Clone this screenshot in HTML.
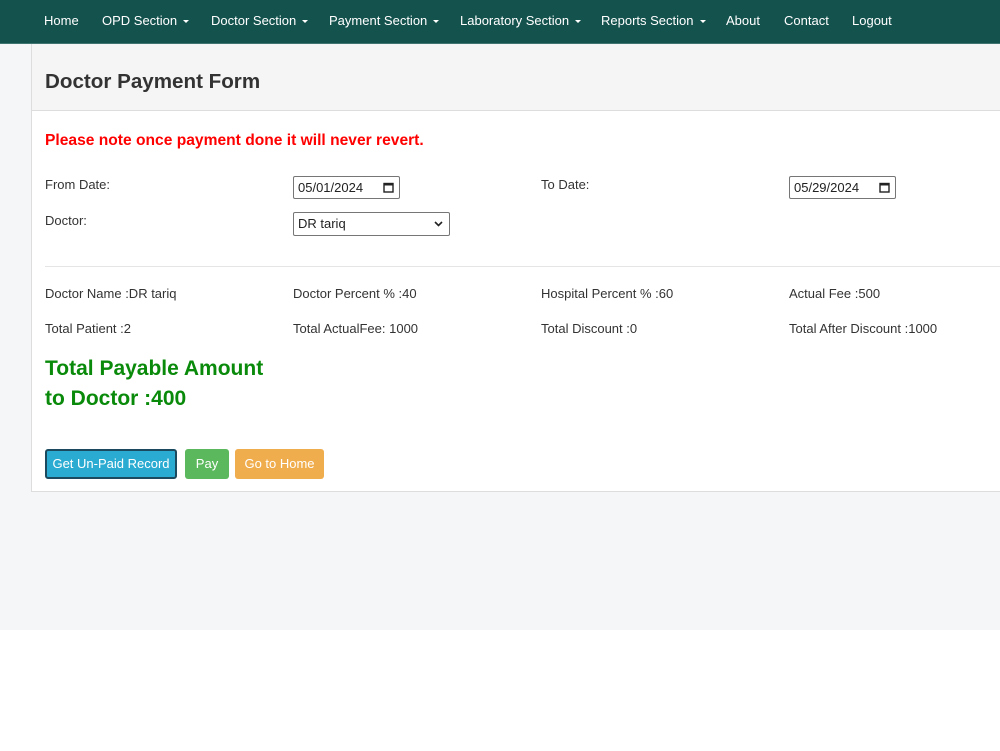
<!DOCTYPE html>
<html><head><style>
body{margin:0;width:1000px;height:751px;background:#fff;font-family:"Liberation Sans",sans-serif;position:relative;overflow:hidden}
.bg{position:absolute;left:0;top:0;width:1000px;height:630px;background:#f5f6f8}
.nav{position:absolute;left:0;top:0;width:1000px;height:43px;background:#14524e;border-bottom:1px solid #3f7571}
.nav span{position:absolute;top:13px;color:#fff;font-size:13px;white-space:nowrap}
.car{display:inline-block;width:0;height:0;border-left:3px solid transparent;border-right:3px solid transparent;border-top:3px solid #fff;vertical-align:middle;margin-left:6px}
.panel{position:absolute;left:31px;top:44px;width:980px;height:447px;background:#fff;border:1px solid #ddd;border-top:none}
.head{position:absolute;left:0;top:0;width:100%;height:66px;background:#f5f5f5;border-bottom:1px solid #ddd}
.t{position:absolute;font-size:13px;color:#333;white-space:nowrap}
.inp{position:absolute;border:1px solid #767676;border-radius:2px;background:#fff;font-size:13px;color:#222;box-sizing:border-box;padding:3px 4px}
.btn{position:absolute;top:405px;height:30px;border-radius:3px;color:#fff;font-size:13px;line-height:30px;text-align:center;box-sizing:border-box}
</style></head><body>
<div class="bg"></div>
<div class="nav">
<span style="left:44px">Home</span>
<span style="left:102px">OPD Section<i class="car"></i></span>
<span style="left:211px">Doctor Section<i class="car"></i></span>
<span style="left:329px">Payment Section<i class="car"></i></span>
<span style="left:460px">Laboratory Section<i class="car"></i></span>
<span style="left:601px">Reports Section<i class="car"></i></span>
<span style="left:726px">About</span>
<span style="left:784px">Contact</span>
<span style="left:852px">Logout</span>
</div>
<div class="panel">
<div class="head"><div style="position:absolute;left:13px;top:26px;font-size:20.6px;font-weight:bold;color:#333">Doctor Payment Form</div></div>
<div style="position:absolute;left:13px;top:88px;font-size:15.6px;font-weight:bold;color:#f00">Please note once payment done it will never revert.</div>
<div class="t" style="left:13px;top:133px">From Date:</div>
<div class="inp" style="left:261px;top:132px;width:107px;height:23px">05/01/2024<svg style="position:absolute;right:5px;top:5px" width="11" height="11" viewBox="0 0 11 11"><rect x="1" y="1.5" width="9" height="8.5" fill="none" stroke="#222" stroke-width="1.4"/><rect x="1" y="1" width="9" height="2.5" fill="#222"/></svg></div>
<div class="t" style="left:509px;top:133px">To Date:</div>
<div class="inp" style="left:757px;top:132px;width:107px;height:23px">05/29/2024<svg style="position:absolute;right:5px;top:5px" width="11" height="11" viewBox="0 0 11 11"><rect x="1" y="1.5" width="9" height="8.5" fill="none" stroke="#222" stroke-width="1.4"/><rect x="1" y="1" width="9" height="2.5" fill="#222"/></svg></div>
<div class="t" style="left:13px;top:169px">Doctor:</div>
<div class="inp" style="left:261px;top:168px;width:157px;height:24px">DR tariq<svg style="position:absolute;right:6px;top:8px" width="9" height="6" viewBox="0 0 9 6"><path d="M1 1l3.5 3.5L8 1" fill="none" stroke="#222" stroke-width="1.6"/></svg></div>
<div style="position:absolute;left:13px;top:222px;width:980px;border-top:1px solid #e5e5e5"></div>
<div class="t" style="left:13px;top:242px">Doctor Name :DR tariq</div>
<div class="t" style="left:261px;top:242px">Doctor Percent % :40</div>
<div class="t" style="left:509px;top:242px">Hospital Percent % :60</div>
<div class="t" style="left:757px;top:242px">Actual Fee :500</div>
<div class="t" style="left:13px;top:277px">Total Patient :2</div>
<div class="t" style="left:261px;top:277px">Total ActualFee: 1000</div>
<div class="t" style="left:509px;top:277px">Total Discount :0</div>
<div class="t" style="left:757px;top:277px">Total After Discount :1000</div>
<div style="position:absolute;left:13px;top:310px;font-size:21px;font-weight:bold;color:#0a8a0a;line-height:30px">Total Payable Amount<br>to Doctor :400</div>
<div class="btn" style="left:13px;width:132px;background:#2aabd2;border:2px solid #1b4a5e;line-height:26px">Get Un-Paid Record</div>
<div class="btn" style="left:153px;width:44px;background:#5cb85c">Pay</div>
<div class="btn" style="left:203px;width:89px;background:#f0ad4e">Go to Home</div>
</div>
</body></html>
